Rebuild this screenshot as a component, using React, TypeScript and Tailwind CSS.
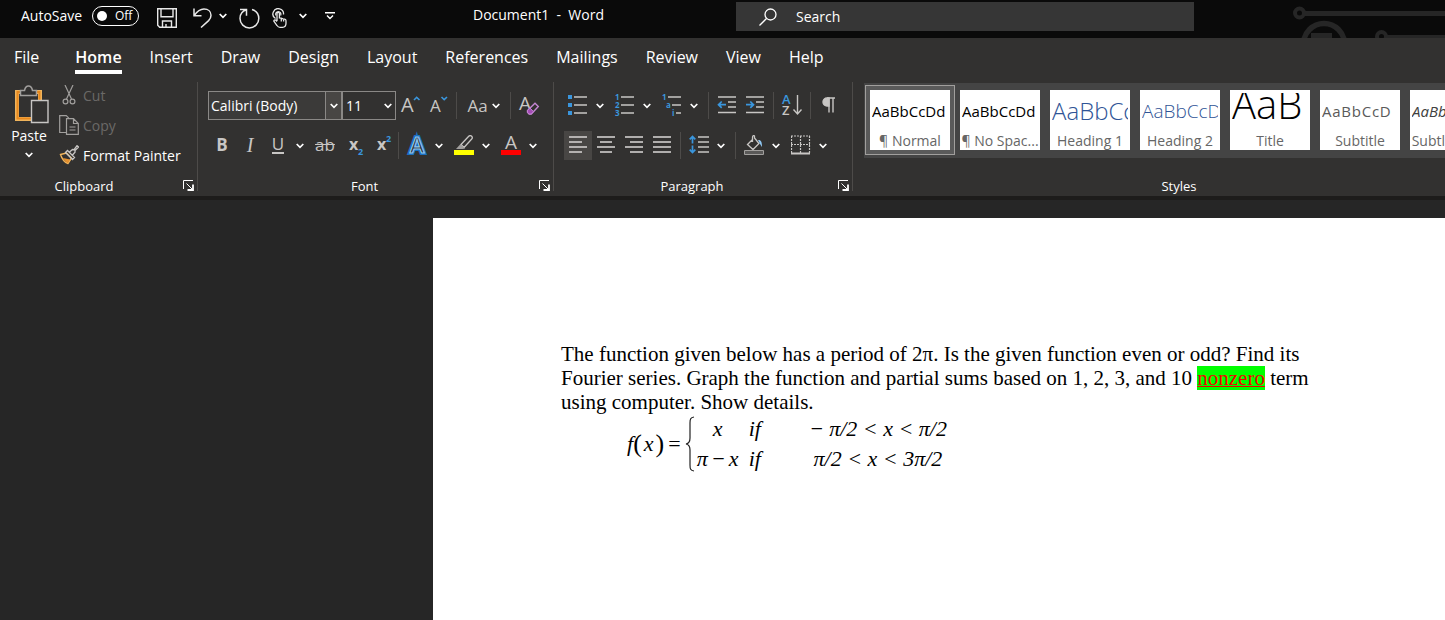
import { ReactNode, useState } from 'react';
import clsx from 'clsx';

const tabs = ['File', 'Home', 'Insert', 'Draw', 'Design', 'Layout', 'References', 'Mailings', 'Review', 'View', 'Help'];

const styles = [
  { name: '¶ Normal', sample: 'AaBbCcDd', look: 'pb-0.5 text-[15px] text-black' },
  { name: '¶ No Spac...', sample: 'AaBbCcDd', look: 'pb-0.5 text-[15px] text-black' },
  { name: 'Heading 1', sample: 'AaBbCc', look: 'pb-0.5 text-[24px] font-light text-[#2f5496]' },
  { name: 'Heading 2', sample: 'AaBbCcD', look: 'pb-0.5 text-[19px] font-light text-[#2f5496]' },
  { name: 'Title', sample: 'AaB', look: 'pb-4 text-[40px] font-light text-black' },
  { name: 'Subtitle', sample: 'AaBbCcD', look: 'pb-0.5 text-[15px] tracking-wider text-[#5a5a5a]' },
  { name: 'Subtle Em...', sample: 'AaBbCcDd', look: 'pb-0.5 text-[15px] italic text-[#404040]' },
];

const GRAY = '#c8c6c4';
const BLUE = '#3a96dd';

function Chevron() {
  return (
    <svg width="8" height="6" viewBox="0 0 8 6" fill="none" stroke="#fff" strokeWidth="1.7">
      <path d="M.7 1L4 4.300 7.300 1" />
    </svg>
  );
}

interface ToolProps {
  label: string;
  active?: boolean;
  children: ReactNode;
}

function Tool({ label, active, children }: ToolProps) {
  return (
    <button
      type="button"
      aria-label={label}
      className={clsx('flex h-[29px] w-7 shrink-0 items-center justify-center pb-0.5 hover:bg-[#484644]', active && 'bg-[#484644]')}
    >
      {children}
    </button>
  );
}

function SplitTool({ label, children }: ToolProps) {
  return (
    <div className="flex shrink-0">
      <Tool label={label}>{children}</Tool>
      <button type="button" aria-label={`${label} options`} className="flex h-[29px] w-4 items-center justify-center">
        <Chevron />
      </button>
    </div>
  );
}

function Divider() {
  return <div className="mx-1 h-[27px] w-px shrink-0 bg-[#4d4b49]" />;
}

function GroupLine() {
  return <div className="mt-px h-[109px] w-px shrink-0 bg-[#4d4b49]" />;
}

function Launcher({ label }: { label: string }) {
  return (
    <button type="button" aria-label={label} className="mr-[3px] shrink-0">
      <svg width="11" height="11" viewBox="0 0 11 11" fill="none" stroke="#fff" strokeWidth="1">
        <path d="M.5 9V.5H10M3.500 3.500l5.500 5.500" />
        <path d="M10 4.500v5.500H4.500" strokeWidth="1.800" />
      </svg>
    </button>
  );
}

function GroupLabel({ name, launcher = true, inset }: { name: string; launcher?: boolean; inset?: string }) {
  return (
    <div className="flex h-[25px] items-center pt-1">
      <span className={clsx('flex-1 text-center text-[13px] leading-5', inset)}>{name}</span>
      {launcher && <Launcher label={`${name} settings`} />}
    </div>
  );
}

function Lines({ rows }: { rows: number[][] }) {
  return (
    <svg width="20" height="20" viewBox="0 0 20 20" stroke={GRAY} strokeWidth="1.700">
      {rows.map(([from, to], i) => (
        <path key={i} d={`M${from} ${2 + i * 5}H${to}`} />
      ))}
    </svg>
  );
}

function TitleBar() {
  const [autoSave, setAutoSave] = useState(false);
  return (
    <div className="grid h-[38px] grid-cols-[473px_263px_minmax(0,458px)_1fr] bg-[#0a0a0a]">
      <div className="flex items-center pb-1.5 pl-[21px]">
        <label htmlFor="autosave" className="w-[71px] text-[14px] leading-5">AutoSave</label>
        <button
          id="autosave"
          type="button"
          role="switch"
          aria-checked={autoSave}
          onClick={() => setAutoSave(!autoSave)}
          className="flex h-5 w-[47px] items-center gap-2 rounded-full border border-white pl-1 text-[12px]"
        >
          <span className="h-[10px] w-[10px] rounded-full bg-white" />
          {autoSave ? 'On' : 'Off'}
        </button>
        <button type="button" aria-label="Save" className="mt-1 ml-[18px]">
          <svg width="20" height="20" viewBox="0 0 20 20" fill="none" stroke="#e8e8e8" strokeWidth="1.400">
            <path d="M.7.7h18.600v18.600H2.700l-2-2zM4 .7v8h12v-8M5.500 19v-6h9v6M9 19v-3" />
          </svg>
        </button>
        <button type="button" aria-label="Undo" className="mt-1 ml-4">
          <svg width="19" height="20" viewBox="0 0 19 20" fill="none" stroke="#e8e8e8" strokeWidth="1.500">
            <path d="M1 .5v7.200h7.500M1.200 7.500C4 3.500 7 1 11 1c4.200 0 7 2.600 7 6.200 0 2.300-.8 3.800-2.400 5.400L8 19.500" />
          </svg>
        </button>
        <button type="button" aria-label="Undo options" className="ml-[7px]"><Chevron /></button>
        <button type="button" aria-label="Repeat" className="mt-1 ml-3">
          <svg width="21" height="21" viewBox="0 0 21 21" fill="none" stroke="#e8e8e8" strokeWidth="1.500">
            <path d="M1 1.500h6.500v6.200M7.300 1.800C3.500 3 1 6.200 1 10.500a9.400 9.400 0 0 0 18.800 0C19.800 6 17 2.700 13 1.500" />
          </svg>
        </button>
        <button type="button" aria-label="Touch mode" className="mt-1 ml-3">
          <svg width="15" height="20" viewBox="0 0 15 20" fill="none" stroke="#e8e8e8" strokeWidth="1.300">
            <path d="M3.500 10.500A5.300 5.300 0 1 1 11.500 6.500" />
            <path d="M4 7.500a2.600 2.600 0 1 1 4.600 0" />
            <path d="M5 13V5.500a1.200 1.200 0 0 1 2.400 0V10l1.800.2 1.800.6 1.700.4c.9.2 1.300.8 1.300 1.600v2.500c0 2.200-1.200 4-3.500 4H8c-1.500 0-2.300-.7-3-1.800L2 13.500c-.7-1.200 1-2 1.800-1.200L5 13.500M9.300 10v3.500M11.600 11v2.500" />
          </svg>
        </button>
        <button type="button" aria-label="Touch mode options" className="ml-3"><Chevron /></button>
        <button type="button" aria-label="Customize toolbar" className="ml-[18px]">
          <svg width="10" height="8" viewBox="0 0 10 8" fill="none" stroke="#fff" strokeWidth="1.400">
            <path d="M0 .7h10M2 3.500l3 3 3-3" />
          </svg>
        </button>
      </div>
      <h1 className="pt-[5px] text-[14px] leading-5 whitespace-pre">Document1  -  Word</h1>
      <label className="mt-0.5 flex h-[29px] items-center bg-[#363636] pl-[23px]">
        <svg width="18" height="18" viewBox="0 0 18 18" fill="none" stroke="#fff" strokeWidth="1.300">
          <circle cx="11.500" cy="6.500" r="5.500" />
          <path d="M7.500 10.500L.5 17.500" />
        </svg>
        <input
          type="text"
          aria-label="Search"
          placeholder="Search"
          className="ml-[19px] min-w-0 flex-1 bg-transparent text-[14px] outline-none placeholder:text-white"
        />
      </label>
      <svg className="ml-auto" width="153" height="38" viewBox="0 0 153 38" fill="none" stroke="#262626">
        <circle cx="7.500" cy="13" r="4.500" strokeWidth="4" />
        <path d="M13 13.500h140" strokeWidth="5" />
        <circle cx="32" cy="44" r="20.500" strokeWidth="5.500" />
        <path d="M19 35.500h21" strokeWidth="5" />
        <circle cx="89.500" cy="36.500" r="4.500" strokeWidth="4" />
        <path d="M95 37h58" strokeWidth="4" />
      </svg>
    </div>
  );
}

function TabBar() {
  const [current, setCurrent] = useState('Home');
  return (
    <nav className="flex h-[43px] gap-7 pl-[14px]">
      {tabs.map((tab) => (
        <button
          key={tab}
          type="button"
          onClick={() => setCurrent(tab)}
          className={clsx(
            'h-9 shrink-0 border-b-4 pt-1.5 text-[16px] leading-6',
            tab === 'File' && 'mr-2',
            tab === current ? 'border-white font-semibold' : 'border-transparent',
          )}
        >
          {tab}
        </button>
      ))}
    </nav>
  );
}

function ClipboardGroup() {
  return (
    <section className="w-[197px] shrink-0">
      <div className="flex h-[90px]">
        <button type="button" className="flex w-[58px] flex-col items-center pt-[3px] text-[14px] leading-5">
          <svg width="40" height="40" viewBox="0 0 40 40" fill="none">
            <path d="M12 8H8v27h15M27 8h4v8" stroke="#f0b45c" strokeWidth="4" />
            <path d="M13 8H8.500v26.500H22M28 8h2.500v8" stroke="#e8881c" strokeWidth="2" />
            <path d="M11.500 11.500v-5h4c.5-2.500 2-4.500 4-4.500s3.500 2 4 4.500h4v5z" stroke="#a19f9d" strokeWidth="1.500" fill="#323130" />
            <path d="M22.500 16.500h16.500v22H22.500z" stroke={GRAY} strokeWidth="1.400" fill="#323130" />
          </svg>
          <span className="mt-0.5 mb-1.5">Paste</span>
          <Chevron />
        </button>
        <div className="flex flex-col pl-px text-[14px]">
          <button type="button" disabled className="flex h-[30px] items-center gap-1 pb-0.5 text-[#6b6967]">
            <svg width="20" height="20" viewBox="0 0 20 20" fill="none" stroke="#a19f9d" strokeWidth="1.200">
              <path d="M6 0l6.500 14M14 0L7.500 14" />
              <circle cx="6.500" cy="16.500" r="2.400" />
              <circle cx="13.500" cy="16.500" r="2.400" />
            </svg>
            Cut
          </button>
          <button type="button" disabled className="flex h-[30px] items-center gap-1 pb-0.5 text-[#6b6967]">
            <svg width="20" height="20" viewBox="0 0 20 20" fill="none" stroke="#a19f9d" strokeWidth="1.200">
              <path d="M7 17.500H.7V.7h6.600l2.500 2.500M7.500 3.700h7l4.800 4.800v10.800H7.500zM14.500 3.700v4.800h4.800M10.500 12h6M10.500 15h6" />
            </svg>
            Copy
          </button>
          <button type="button" className="flex h-[30px] items-center gap-1 pb-0.5">
            <svg width="20" height="20" viewBox="0 0 20 20" fill="none">
              <path d="M1.500 9.500l6-1.500 5 5-3.500 5.500c-3-1-6-4.500-7.500-9z" stroke="#f2b45a" strokeWidth="1.400" fill="#323130" />
              <path d="M4 13l7 1.500L9 18c-2-1-3.500-2.500-5-5z" fill="#e8912d" />
              <path d="M6.500 7.500l2-2 7 7-2 2zM10.500 7l3-2.500 1.500.2 3-4 1.500 1.300-3.500 3.500v1.700L13.500 10" stroke={GRAY} strokeWidth="1.300" />
            </svg>
            Format Painter
          </button>
        </div>
      </div>
      <GroupLabel name="Clipboard" inset="pr-[15px]" />
    </section>
  );
}

function FontGroup() {
  return (
    <section className="w-[355px] shrink-0">
      <div className="flex h-[90px] flex-col gap-[11px] px-[10px] pt-[10px]">
        <div className="flex items-center">
          <div className="flex h-[29px] w-[134px] border border-[#8a8886] bg-[#3b3a39]">
            <input aria-label="Font" defaultValue="Calibri (Body)" className="min-w-0 flex-1 bg-transparent pl-0.5 text-[14px] outline-none" />
            <button type="button" aria-label="Font list" className="flex w-4 items-center justify-center border-l border-[#8a8886] bg-[#484644]">
              <Chevron />
            </button>
          </div>
          <div className="flex h-[29px] w-[54px] border border-[#8a8886] bg-[#323130]">
            <input aria-label="Font size" defaultValue="11" className="min-w-0 flex-1 bg-transparent pl-[3px] text-[14px] outline-none" />
            <button type="button" aria-label="Font size list" className="flex w-[14px] items-center justify-center">
              <Chevron />
            </button>
          </div>
          <Tool label="Increase font size">
            <svg className="overflow-visible" width="20" height="20" viewBox="0 0 20 20" fill="none">
              <text x="1" y="17" fontSize="20" fill={GRAY}>A</text>
              <path d="M14 5l2.700-2.700L19.500 5" stroke={BLUE} strokeWidth="1.600" />
            </svg>
          </Tool>
          <Tool label="Decrease font size">
            <svg className="overflow-visible" width="20" height="20" viewBox="0 0 20 20" fill="none">
              <text x="2" y="17" fontSize="17" fill={GRAY}>A</text>
              <path d="M13.500 2l2.700 2.700L19 2" stroke={BLUE} strokeWidth="1.600" />
            </svg>
          </Tool>
          <Divider />
          <button type="button" aria-label="Change case" className="flex h-[29px] w-[46px] items-center justify-center gap-1 text-[17px] text-[#c8c6c4]">
            Aa
            <Chevron />
          </button>
          <Divider />
          <Tool label="Clear formatting">
            <svg className="overflow-visible" width="20" height="20" viewBox="0 0 20 20" fill="none">
              <text x="0" y="15" fontSize="19" fill={GRAY}>A</text>
              <path d="M8.500 15.500l7.500-7.200 3.300 3.200-7 7.500h-2.200l-1.600-1.700z" stroke="#c586d3" strokeWidth="1.400" fill="#323130" />
              <path d="M8.500 15.500l2.500-2.500 3.500 3.700-2.200 2.300h-2.200l-1.600-1.700z" fill="#a44bb5" stroke="#c586d3" />
            </svg>
          </Tool>
        </div>
        <div className="flex items-center text-[#c8c6c4]">
          <Tool label="Bold"><span className="text-[17px] font-bold">B</span></Tool>
          <Tool label="Italic"><span className="font-['Liberation_Serif',serif] text-[20px] italic">I</span></Tool>
          <SplitTool label="Underline"><span className="border-b-2 border-[#c8c6c4] text-[17px] leading-4">U</span></SplitTool>
          <div className="mx-[3px]"><Tool label="Strikethrough"><span className="text-[17px] line-through">ab</span></Tool></div>
          <div className="flex">
            <Tool label="Subscript">
              <svg className="overflow-visible" width="16" height="20" viewBox="0 0 16 20">
                <text x="1" y="15" fontSize="16" fontWeight="700" fill={GRAY}>x</text>
                <text x="10" y="20" fontSize="9" fontWeight="700" fill={BLUE}>2</text>
              </svg>
            </Tool>
            <Tool label="Superscript">
              <svg className="overflow-visible" width="16" height="20" viewBox="0 0 16 20">
                <text x="1" y="15" fontSize="16" fontWeight="700" fill={GRAY}>x</text>
                <text x="10" y="7" fontSize="9" fontWeight="700" fill={BLUE}>2</text>
              </svg>
            </Tool>
          </div>
          <div className="-ml-1"><Divider /></div>
          <div className="flex gap-[3px]">
            <SplitTool label="Text effects">
              <svg className="overflow-visible" width="20" height="20" viewBox="0 0 20 20">
                <text x="10" y="18" fontSize="22" fontWeight="600" textAnchor="middle" fill="none" stroke="#1a6fc0" strokeWidth="4">A</text>
                <text x="10" y="18" fontSize="22" fontWeight="600" textAnchor="middle" fill="#323130" stroke="#8ec6f2" strokeWidth="1.200">A</text>
              </svg>
            </SplitTool>
            <SplitTool label="Text highlight colour">
              <svg width="20" height="20" viewBox="0 0 20 20" fill="none">
                <path d="M7 9.500L14.500 1.500c1-1 2.300-1 3.200-.2.900 1 .8 2-.2 3L10 12.500z" stroke={GRAY} strokeWidth="1.300" />
                <path d="M6.500 9L11 13.500 8.500 14H2z" fill="#a19f9d" />
                <path d="M0 15h20v5H0z" fill="#ff0" />
              </svg>
            </SplitTool>
            <SplitTool label="Font colour">
              <svg className="overflow-visible" width="20" height="20" viewBox="0 0 20 20">
                <text x="10" y="14" fontSize="19" textAnchor="middle" fill={GRAY}>A</text>
                <path d="M0 15h20v5H0z" fill="#f00" />
              </svg>
            </SplitTool>
          </div>
        </div>
      </div>
      <GroupLabel name="Font" inset="pr-2" />
    </section>
  );
}

function ParagraphGroup() {
  return (
    <section className="w-[298px] shrink-0">
      <div className="flex h-[90px] flex-col gap-[11px] px-[10px] pt-[10px]">
        <div className="flex items-center">
          <div className="flex gap-[3px] pr-0.5">
            <SplitTool label="Bullets">
              <svg width="20" height="20" viewBox="0 0 20 20">
                <path d="M0 0h4v4H0zM0 8h4v4H0zM0 16h4v4H0z" fill={BLUE} />
                <path d="M6 2h13M6 10h13M6 18h13" stroke={GRAY} strokeWidth="1.700" />
              </svg>
            </SplitTool>
            <SplitTool label="Numbering">
              <svg className="overflow-visible" width="20" height="22" viewBox="0 0 20 22" fontSize="8" fontWeight="700" fill={BLUE}>
                <text x="0" y="6">1</text>
                <text x="0" y="14">2</text>
                <text x="0" y="22">3</text>
                <path d="M6 3h13M6 11h13M6 19h13" stroke={GRAY} strokeWidth="1.700" />
              </svg>
            </SplitTool>
            <SplitTool label="Multilevel list">
              <svg className="overflow-visible" width="20" height="22" viewBox="0 0 20 22" fontSize="8" fontWeight="700" fill={BLUE}>
                <text x="0" y="6">1</text>
                <text x="4" y="14">a</text>
                <text x="10" y="22">i</text>
                <path d="M6 3h13M10 11h9M14 19h5" stroke={GRAY} strokeWidth="1.700" />
              </svg>
            </SplitTool>
          </div>
          <Divider />
          <Tool label="Decrease indent">
            <svg width="20" height="20" viewBox="0 0 20 20" fill="none">
              <path d="M1 2h18M11 7h8M11 12h8M1 17.500h18" stroke={GRAY} strokeWidth="1.700" />
              <path d="M9 9.700H1.500M4.700 6.500L1.500 9.700l3.200 3.200" stroke={BLUE} strokeWidth="1.700" />
            </svg>
          </Tool>
          <Tool label="Increase indent">
            <svg width="20" height="20" viewBox="0 0 20 20" fill="none">
              <path d="M1 2h18M11 7h8M11 12h8M1 17.500h18" stroke={GRAY} strokeWidth="1.700" />
              <path d="M1 9.700h7.500M5.300 6.500l3.200 3.200-3.200 3.200" stroke={BLUE} strokeWidth="1.700" />
            </svg>
          </Tool>
          <Divider />
          <Tool label="Sort">
            <svg className="overflow-visible" width="20" height="22" viewBox="0 0 20 22" fill="none" fontWeight="600" fontSize="13">
              <text x="0" y="10" fill={BLUE}>A</text>
              <text x="0" y="21" fill={GRAY}>Z</text>
              <path d="M15.500 1v19M11.500 15.500l4 4.500 4-4.500" stroke={GRAY} strokeWidth="1.400" />
            </svg>
          </Tool>
          <Divider />
          <Tool label="Show paragraph marks">
            <svg width="14" height="16" viewBox="0 0 14 16" fill="none" stroke={GRAY} strokeWidth="1.400">
              <path d="M5 1h8M7 1v14.500M11 1v14.500" />
              <path d="M7 1H5a4 4 0 0 0 0 8h2z" fill={GRAY} />
            </svg>
          </Tool>
        </div>
        <div className="flex items-center">
          <Tool label="Align left" active><Lines rows={[[1, 19], [1, 14], [1, 19], [1, 14]]} /></Tool>
          <Tool label="Centre"><Lines rows={[[1, 19], [4, 16], [1, 19], [4, 16]]} /></Tool>
          <Tool label="Align right"><Lines rows={[[1, 19], [6, 19], [1, 19], [6, 19]]} /></Tool>
          <Tool label="Justify"><Lines rows={[[1, 19], [1, 19], [1, 19], [1, 19]]} /></Tool>
          <Divider />
          <div className="pr-0.5">
            <SplitTool label="Line spacing">
              <svg width="20" height="20" viewBox="0 0 20 20" fill="none">
                <path d="M9 2h11M9 7h11M9 12h11M9 17h11" stroke={GRAY} strokeWidth="1.700" />
                <path d="M3.500 8.500v-7M.7 4.300l2.800-2.800 2.800 2.800M3.500 10.500v7M.7 14.700l2.800 2.800 2.800-2.800" stroke={BLUE} strokeWidth="1.700" />
              </svg>
            </SplitTool>
          </div>
          <Divider />
          <div className="flex gap-[3px]">
            <SplitTool label="Shading">
              <svg width="20" height="20" viewBox="0 0 20 20" fill="none">
                <path d="M9 4L3.500 9.500l5.500 5 6-6L10.500 3V1c-1-1-2 0-2 1.500V7" stroke={GRAY} strokeWidth="1.300" />
                <path d="M14 5c3-.5 4 2 4 7l-2-3z" fill="#8ec6f2" />
                <path d="M.5 15.500h19v4H.5z" fill="#5a5958" stroke="#a19f9d" />
              </svg>
            </SplitTool>
            <SplitTool label="Borders">
              <svg width="20" height="20" viewBox="0 0 20 20" fill="none" stroke={GRAY}>
                <path d="M0 1h19M.5 1v17M18.500 1v17M9.500 1v17M0 9.500h19" strokeWidth="1.200" strokeDasharray="2 1" />
                <path d="M0 18.500h19" strokeWidth="2" />
              </svg>
            </SplitTool>
          </div>
        </div>
      </div>
      <GroupLabel name="Paragraph" inset="pr-2" />
    </section>
  );
}

function StylesGroup() {
  const [selected, setSelected] = useState('¶ Normal');
  return (
    <section className="w-[652px] shrink-0">
      <div className="h-[90px] pt-0.5 pl-[11px]">
        <div className="flex h-[75px] bg-[#444] pt-0.5 pl-px">
          {styles.map((style) => (
            <button
              key={style.name}
              type="button"
              onClick={() => setSelected(style.name)}
              className={clsx(
                'h-[70px] w-[90px] shrink-0 border p-1',
                style.name === selected ? 'border-[#a19f9d] bg-[#5a5a5a]' : 'border-transparent',
              )}
            >
              <span className="flex h-[60px] flex-col overflow-hidden bg-white pt-[3px] text-left">
                <span className={clsx('mx-[2px] flex h-[38px] shrink-0 items-center overflow-hidden whitespace-nowrap', style.look)}>
                  {style.sample}
                </span>
                <span className="text-center text-[14px] leading-[19px] whitespace-nowrap text-[#666]">{style.name}</span>
              </span>
            </button>
          ))}
        </div>
      </div>
      <GroupLabel name="Styles" launcher={false} />
    </section>
  );
}

function Equation() {
  return (
    <div className="flex items-center pl-[66px] font-['Liberation_Serif',serif] text-[22px] leading-[30px] whitespace-nowrap italic">
      <span>f</span>
      <span className="text-[26px] not-italic">(</span>
      <span className="mx-0.5">x</span>
      <span className="text-[26px] not-italic">)</span>
      <span className="ml-1 not-italic">=</span>
      <svg className="ml-1" width="10" height="56" viewBox="0 0 10 56" fill="none" stroke="#222" strokeWidth="1.200">
        <path d="M9 1C5.500 1.500 5 3 5 7v15c0 4-1 5.500-4 6 3 .5 4 2 4 6v15c0 4 .5 5.500 4 6" />
      </svg>
      <div className="grid grid-cols-[46px_auto_auto] items-center text-center">
        <span>x</span>
        <span className="pl-2">if</span>
        <span className="pl-12">− π/2 &lt; x &lt; π/2</span>
        <span className="flex justify-center gap-[3px]"><span>π</span><span>−</span><span>x</span></span>
        <span className="pl-2">if</span>
        <span className="pl-12">π/2 &lt; x &lt; 3π/2</span>
      </div>
    </div>
  );
}

export default function App() {
  return (
    <div className="flex min-h-screen flex-col overflow-hidden bg-[#262626] font-['Open_Sans',sans-serif] text-white">
      <header className="bg-[#323130]">
        <TitleBar />
        <TabBar />
        <div className="flex h-[115px]">
          <ClipboardGroup />
          <GroupLine />
          <FontGroup />
          <GroupLine />
          <ParagraphGroup />
          <GroupLine />
          <StylesGroup />
        </div>
      </header>
      <main className="flex flex-1 flex-col border-t-4 border-[#1d1c1b] pt-[18px] pl-[433px]">
        <article className="flex-1 bg-white pt-[124px] pl-32 text-black">
          <p className="font-['Liberation_Serif',serif] text-[21px] leading-6 whitespace-nowrap">
            The function given below has a period of 2π. Is the given function even or odd? Find its
            <br />
            Fourier series. Graph the function and partial sums based on 1, 2, 3, and 10{' '}
            <mark className="bg-[#00ff00] text-[#f00000] underline decoration-1">nonzero</mark> term
            <br />
            using computer. Show details.
          </p>
          <Equation />
        </article>
      </main>
    </div>
  );
}
